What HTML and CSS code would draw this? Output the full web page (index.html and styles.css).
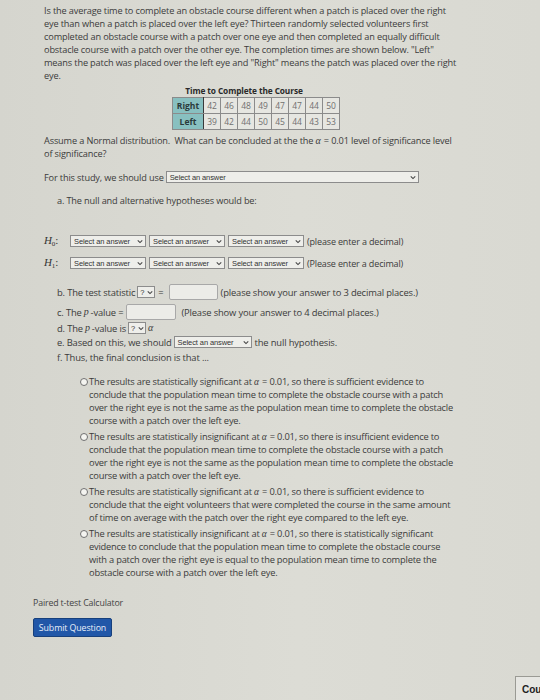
FILE: index.html
```html
<!DOCTYPE html>
<html>
<head>
<meta charset="utf-8">
<link rel="stylesheet" href="styles.css">
</head>
<body>
<div class="page">
  <p class="intro">Is the average time to complete an obstacle course different when a patch is placed over the right eye than when a patch is placed over the left eye? Thirteen randomly selected volunteers first completed an obstacle course with a patch over one eye and then completed an equally difficult obstacle course with a patch over the other eye. The completion times are shown below. "Left" means the patch was placed over the left eye and "Right" means the patch was placed over the right eye.</p>

  <div class="tablewrap">
    <div class="ttitle">Time to Complete the Course</div>
    <table class="data">
      <tr><th>Right</th><td>42</td><td>46</td><td>48</td><td>49</td><td>47</td><td>47</td><td>44</td><td>50</td></tr>
      <tr><th>Left</th><td>39</td><td>42</td><td>44</td><td>50</td><td>45</td><td>44</td><td>43</td><td>53</td></tr>
    </table>
  </div>

  <p class="assume">Assume a Normal distribution. &nbsp;What can be concluded at the the <span class="math">α</span> = 0.01 level of significance level of significance?</p>

  <div class="study">For this study, we should use <span class="sel wide">Select an answer<svg class="chev" viewBox="0 0 8 6"><path d="M1 1.5 L4 4.5 L7 1.5" fill="none" stroke="#444" stroke-width="1.4"/></svg></span></div>

  <div class="parta">a. The null and alternative hypotheses would be:</div>

  <div class="hyp h0"><span class="hl"><i>H</i><sub>0</sub>:</span>
    <span class="sel">Select an answer<svg class="chev" viewBox="0 0 8 6"><path d="M1 1.5 L4 4.5 L7 1.5" fill="none" stroke="#444" stroke-width="1.4"/></svg></span>
    <span class="sel">Select an answer<svg class="chev" viewBox="0 0 8 6"><path d="M1 1.5 L4 4.5 L7 1.5" fill="none" stroke="#444" stroke-width="1.4"/></svg></span>
    <span class="sel">Select an answer<svg class="chev" viewBox="0 0 8 6"><path d="M1 1.5 L4 4.5 L7 1.5" fill="none" stroke="#444" stroke-width="1.4"/></svg></span>
    <span class="note">(please enter a decimal)</span></div>
  <div class="hyp h1"><span class="hl"><i>H</i><sub>1</sub>:</span>
    <span class="sel">Select an answer<svg class="chev" viewBox="0 0 8 6"><path d="M1 1.5 L4 4.5 L7 1.5" fill="none" stroke="#444" stroke-width="1.4"/></svg></span>
    <span class="sel">Select an answer<svg class="chev" viewBox="0 0 8 6"><path d="M1 1.5 L4 4.5 L7 1.5" fill="none" stroke="#444" stroke-width="1.4"/></svg></span>
    <span class="sel">Select an answer<svg class="chev" viewBox="0 0 8 6"><path d="M1 1.5 L4 4.5 L7 1.5" fill="none" stroke="#444" stroke-width="1.4"/></svg></span>
    <span class="note">(Please enter a decimal)</span></div>

  <div class="steps">
    <div class="row rb">b. The test statistic <span class="sel q">?<svg class="chev" viewBox="0 0 8 6"><path d="M1 1.5 L4 4.5 L7 1.5" fill="none" stroke="#444" stroke-width="1.4"/></svg></span> <span class="eq">=</span> <span class="inp"></span> <span>(please show your answer to 3 decimal places.)</span></div>
    <div class="row rc">c. The <i class="mi">p</i>-value = <span class="inp"></span> <span>(Please show your answer to 4 decimal places.)</span></div>
    <div class="row rd">d. The <i class="mi">p</i>-value is <span class="sel q">?<svg class="chev" viewBox="0 0 8 6"><path d="M1 1.5 L4 4.5 L7 1.5" fill="none" stroke="#444" stroke-width="1.4"/></svg></span> <span class="math">α</span></div>
    <div class="row re">e. Based on this, we should <span class="sel">Select an answer<svg class="chev" viewBox="0 0 8 6"><path d="M1 1.5 L4 4.5 L7 1.5" fill="none" stroke="#444" stroke-width="1.4"/></svg></span> the null hypothesis.</div>
    <div class="row rf">f. Thus, the final conclusion is that ...</div>
  </div>

  <div class="options">
    <div class="opt"><span class="radio"></span><div class="otext">The results are statistically significant at <span class="math">α</span> = 0.01, so there is sufficient evidence to conclude that the population mean time to complete the obstacle course with a patch over the right eye is not the same as the population mean time to complete the obstacle course with a patch over the left eye.</div></div>
    <div class="opt"><span class="radio"></span><div class="otext">The results are statistically insignificant at <span class="math">α</span> = 0.01, so there is insufficient evidence to conclude that the population mean time to complete the obstacle course with a patch over the right eye is not the same as the population mean time to complete the obstacle course with a patch over the left eye.</div></div>
    <div class="opt"><span class="radio"></span><div class="otext">The results are statistically significant at <span class="math">α</span> = 0.01, so there is sufficient evidence to conclude that the eight volunteers that were completed the course in the same amount of time on average with the patch over the right eye compared to the left eye.</div></div>
    <div class="opt"><span class="radio"></span><div class="otext">The results are statistically insignificant at <span class="math">α</span> = 0.01, so there is statistically significant evidence to conclude that the population mean time to complete the obstacle course with a patch over the right eye is equal to the population mean time to complete the obstacle course with a patch over the left eye.</div></div>
  </div>

  <div class="bottom">
    <div class="calc">Paired t-test Calculator</div>
    <button class="submit">Submit Question</button>
  </div>
</div>
<div class="corner">Cou</div>
</body>
</html>
```
FILE: styles.css
```css
html, body {
  margin: 0;
  padding: 0;
}
body {
  width: 540px;
  height: 700px;
  overflow: hidden;
  background: linear-gradient(90deg, #d5d5ce 0%, #dcdcd5 55%, #d9d9d2 100%);
  font-family: "Open Sans", "Noto Sans", sans-serif;
  color: #3b3b3b;
  font-size: 9.2px;
  position: relative;
}
.page {
  display: flex;
  flex-direction: column;
  align-items: flex-start;
  padding: 4px 0 0 44px;
}
.intro {
  margin: 0;
  width: 416px;
  line-height: 13px;
  letter-spacing: -0.15px;
}
.tablewrap {
  display: flex;
  flex-direction: column;
  align-items: center;
  width: 400px;
  margin-top: 3px;
}
.ttitle {
  font-weight: bold;
  font-size: 8.3px;
  line-height: 12px;
  color: #2a2a2a;
  letter-spacing: -0.1px;
}
.data {
  border-collapse: collapse;
  border: 1.5px solid #3a3a3a;
  margin-left: 24px;
}
.data th, .data td {
  border: 1px solid #8b8b8b;
  height: 15px;
  padding: 0;
  font-size: 8.5px;
  line-height: 15px;
  text-align: center;
}
.data th {
  background: #88c0c0;
  width: 30px;
  color: #2a3a3a;
  font-weight: bold;
  border-right: 1.5px solid #3a3a3a;
}
.data td {
  width: 16px;
  color: #707070;
  background: #e6e6e1;
}
.assume {
  margin: 4px 0 0 0;
  width: 412px;
  line-height: 13px;
  letter-spacing: -0.15px;
}
.math {
  font-family: "Liberation Serif", "DejaVu Serif", serif;
  font-style: italic;
  font-size: 10px;
  line-height: 1;
  margin-right: 1px;
}
.mi {
  font-family: "Liberation Serif", "DejaVu Serif", serif;
  font-size: 10px;
  line-height: 1;
}
.study {
  margin-top: 10px;
  display: flex;
  align-items: center;
  gap: 2px;
  height: 14px;
  letter-spacing: -0.15px;
}
.sel {
  display: inline-flex;
  align-items: center;
  justify-content: space-between;
  box-sizing: border-box;
  height: 12px;
  padding: 0 2px 0 3px;
  border: 1px solid #8c8c8c;
  background: #eeeeea;
  font-family: "Liberation Sans", Arial, sans-serif;
  font-size: 7.5px;
  color: #333;
  letter-spacing: -0.1px;
  gap: 3px;
  vertical-align: middle;
}
.sel.wide {
  width: 253px;
}
.chev {
  width: 6px;
  height: 5px;
  flex: none;
}
.sel.q {
  width: 18px;
  padding: 0 1px 0 2px;
  gap: 1px;
}
.parta {
  margin: 10px 0 0 13px;
  line-height: 13px;
  letter-spacing: -0.15px;
}
.hyp {
  display: flex;
  align-items: center;
  gap: 3px;
  height: 14px;
  font-size: 9px;
  letter-spacing: -0.15px;
}
.hyp .sel {
  width: 76px;
}
.h0 {
  margin-top: 27px;
}
.h1 {
  margin-top: 8px;
}
.hl {
  font-family: "Liberation Serif", "DejaVu Serif", serif;
  font-size: 11px;
  width: 23px;
  color: #333;
}
.hl i {
  font-style: italic;
}
.hl sub {
  font-size: 7px;
  vertical-align: -2px;
}
.steps {
  margin-top: 12px;
  margin-left: 13px;
  display: flex;
  flex-direction: column;
  font-size: 9.4px;
  letter-spacing: -0.15px;
}
.row {
  display: flex;
  align-items: center;
  gap: 2px;
  white-space: nowrap;
}
.inp {
  display: inline-block;
  box-sizing: border-box;
  width: 50px;
  height: 16px;
  border: 1px solid #a8a8a8;
  background: #ecece8;
  border-radius: 2px;
}
.rb { height: 20px; }
.rb .eq { margin: 0 3px 0 1px; }
.rb .inp { width: 49px; margin-right: 1px; }
.rc { height: 18px; margin-top: 1px; }
.rc .inp { margin-left: 1px; margin-right: 3px; }
.rd { height: 14px; }
.re { height: 14px; }
.re .sel { width: 78px; margin-right: 1px; }
.rf { height: 14px; margin-top: 1px; }
.options {
  margin: 11px 0 0 36px;
  display: flex;
  flex-direction: column;
  gap: 3px;
}
.opt {
  display: flex;
  align-items: flex-start;
  font-size: 9.3px;
  line-height: 13px;
  letter-spacing: -0.2px;
}
.radio {
  flex: none;
  box-sizing: border-box;
  width: 8px;
  height: 8px;
  border-radius: 50%;
  border: 1px solid #707070;
  background: #f4f4f0;
  margin-top: 3px;
  margin-right: 1px;
}
.otext {
  width: 368px;
}
.otext .math {
  font-size: 9.5px;
}
.bottom {
  margin: 18px 0 0 -11px;
  display: flex;
  flex-direction: column;
  align-items: flex-start;
}
.calc {
  font-size: 8.8px;
  line-height: 12px;
  color: #444;
  letter-spacing: -0.15px;
}
.submit {
  margin-top: 9px;
  font-family: "Open Sans", "Noto Sans", sans-serif;
  font-size: 8.8px;
  color: #e8eef8;
  background: #2157a8;
  border: 1px solid #17407c;
  border-radius: 2px;
  height: 19px;
  width: 79px;
  padding: 0;
  letter-spacing: -0.1px;
}
.corner {
  position: absolute;
  left: 515px;
  top: 676px;
  width: 45px;
  height: 30px;
  box-sizing: border-box;
  border: 1px solid #9a9a94;
  background: #e6e6e2;
  font-family: "Liberation Sans", Arial, sans-serif;
  font-weight: bold;
  font-size: 10px;
  color: #222;
  padding: 7px 0 0 6px;
}
```
